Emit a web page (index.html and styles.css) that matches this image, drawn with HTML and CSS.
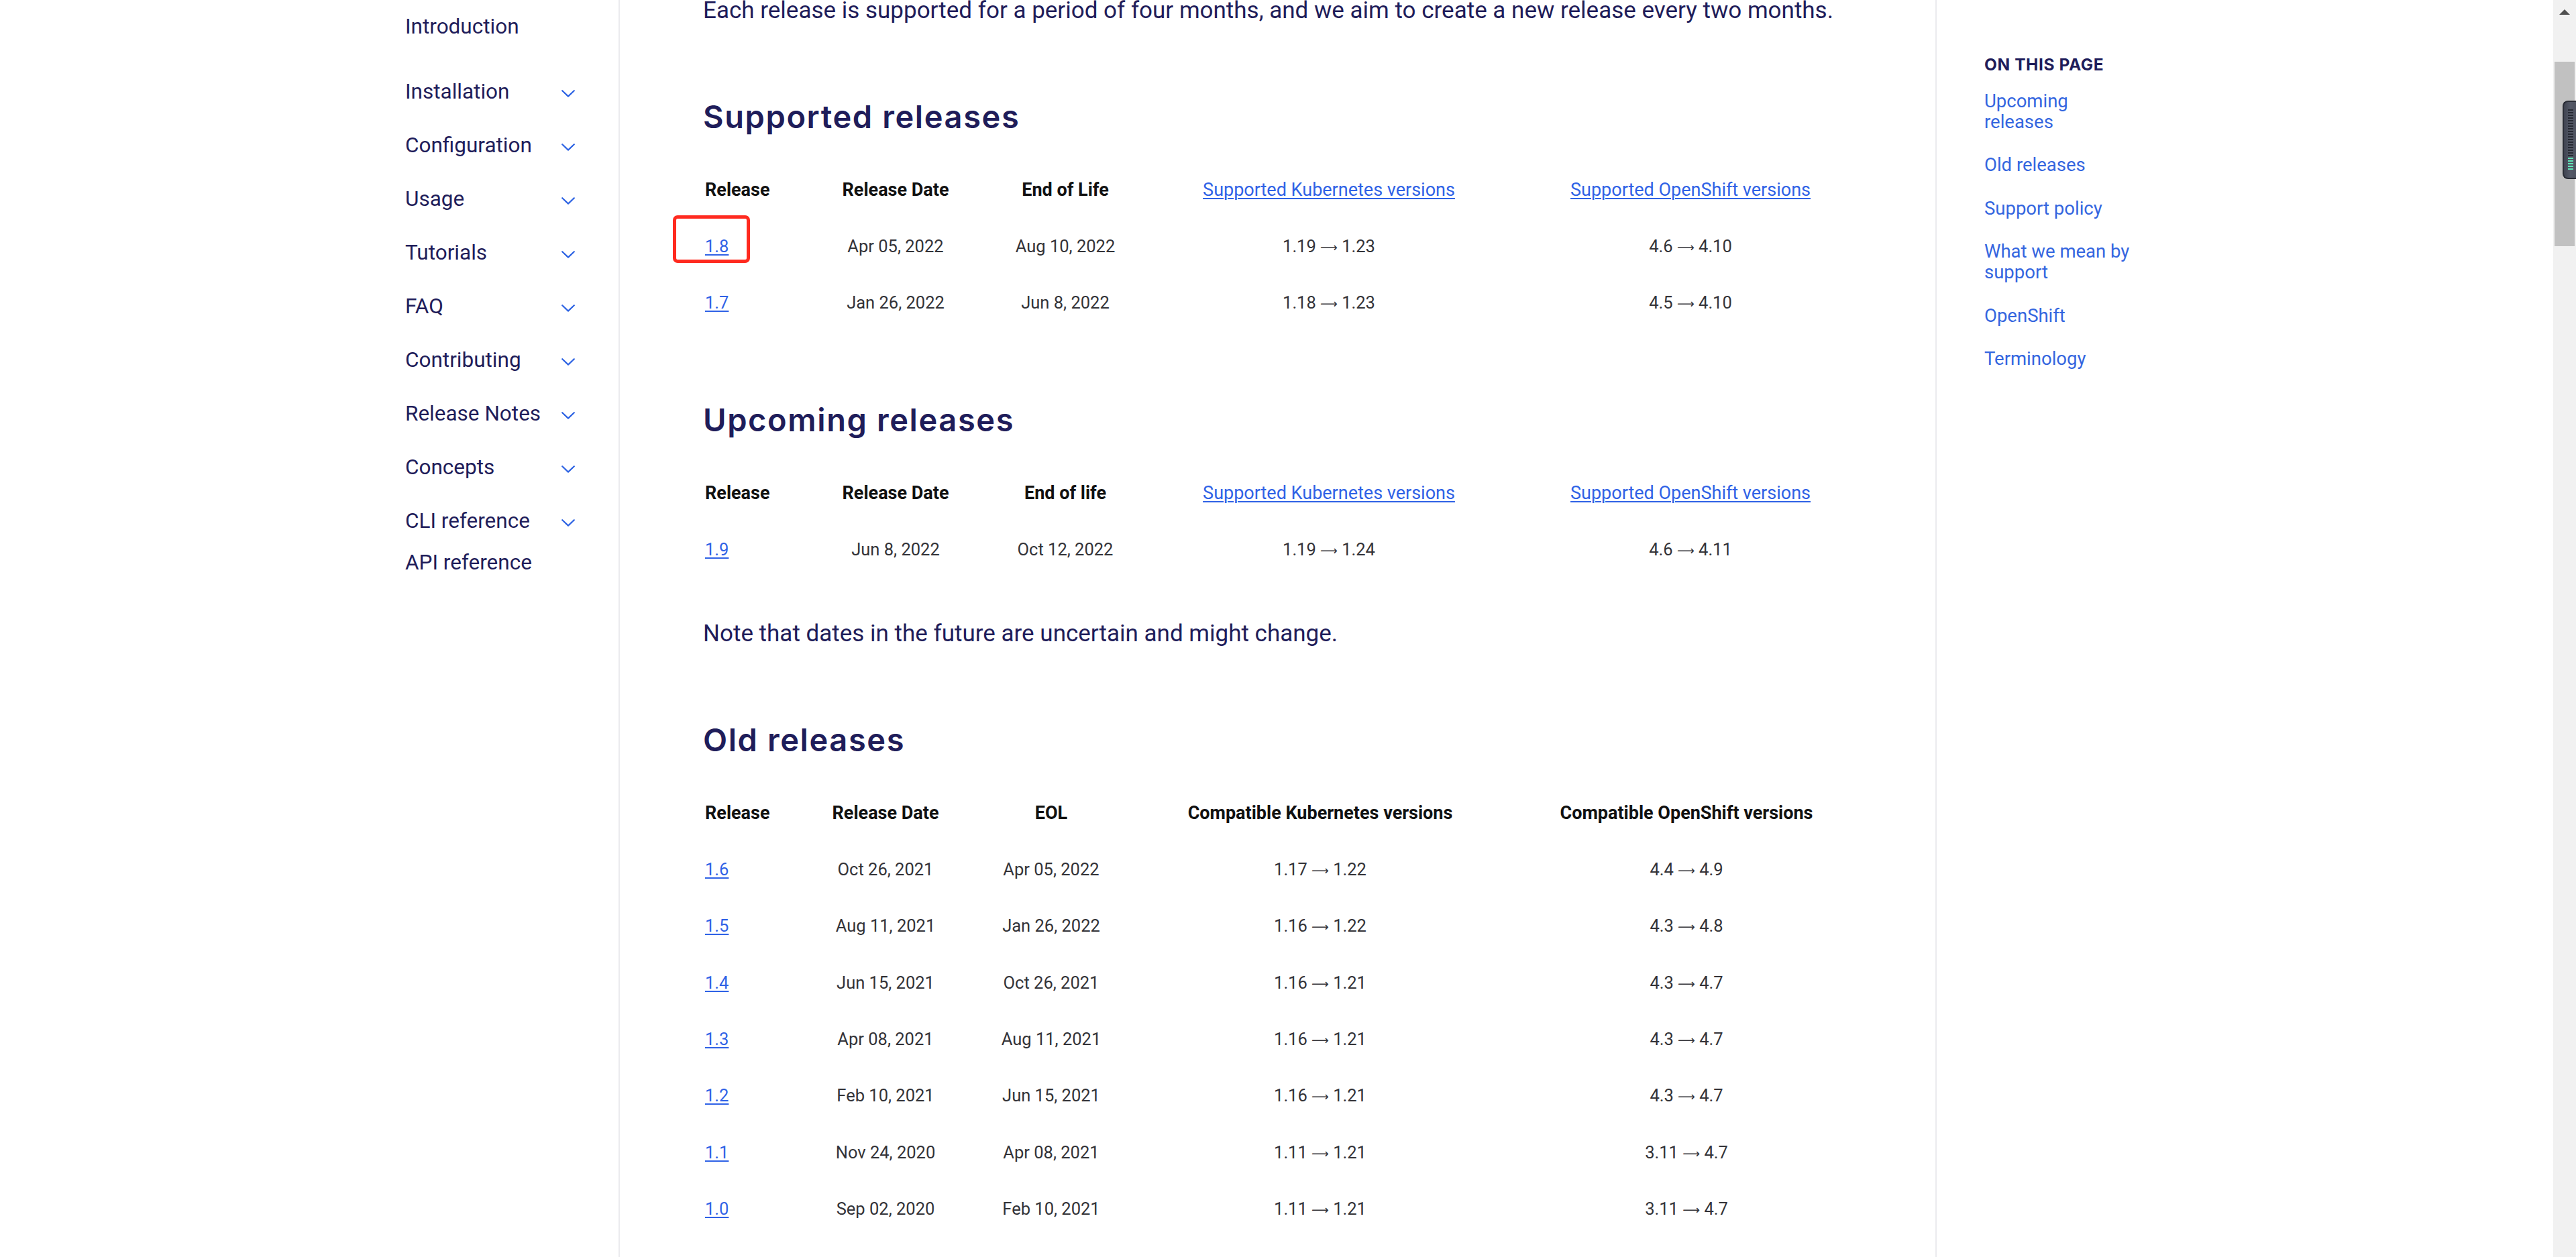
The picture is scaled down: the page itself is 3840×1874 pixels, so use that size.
FILE: index.html
```html
<!DOCTYPE html>
<html lang="en">
<head>
<meta charset="utf-8">
<title>Supported releases</title>
<link rel="stylesheet" href="styles.css">
</head>
<body>
<div class="page">
  <aside class="sidebar">
    <nav class="docs-nav">
      <a class="nav-item nav-intro" href="#">Introduction</a>
      <div class="nav-group"><a class="nav-item" href="#">Installation</a><svg class="chev" viewBox="0 0 20 11" width="20" height="11"><path d="M1.2 1.2 L10 9.6 L18.8 1.2"/></svg></div>
      <div class="nav-group"><a class="nav-item" href="#">Configuration</a><svg class="chev" viewBox="0 0 20 11" width="20" height="11"><path d="M1.2 1.2 L10 9.6 L18.8 1.2"/></svg></div>
      <div class="nav-group"><a class="nav-item" href="#">Usage</a><svg class="chev" viewBox="0 0 20 11" width="20" height="11"><path d="M1.2 1.2 L10 9.6 L18.8 1.2"/></svg></div>
      <div class="nav-group"><a class="nav-item" href="#">Tutorials</a><svg class="chev" viewBox="0 0 20 11" width="20" height="11"><path d="M1.2 1.2 L10 9.6 L18.8 1.2"/></svg></div>
      <div class="nav-group"><a class="nav-item" href="#">FAQ</a><svg class="chev" viewBox="0 0 20 11" width="20" height="11"><path d="M1.2 1.2 L10 9.6 L18.8 1.2"/></svg></div>
      <div class="nav-group"><a class="nav-item" href="#">Contributing</a><svg class="chev" viewBox="0 0 20 11" width="20" height="11"><path d="M1.2 1.2 L10 9.6 L18.8 1.2"/></svg></div>
      <div class="nav-group"><a class="nav-item" href="#">Release Notes</a><svg class="chev" viewBox="0 0 20 11" width="20" height="11"><path d="M1.2 1.2 L10 9.6 L18.8 1.2"/></svg></div>
      <div class="nav-group"><a class="nav-item" href="#">Concepts</a><svg class="chev" viewBox="0 0 20 11" width="20" height="11"><path d="M1.2 1.2 L10 9.6 L18.8 1.2"/></svg></div>
      <div class="nav-group"><a class="nav-item" href="#">CLI reference</a><svg class="chev" viewBox="0 0 20 11" width="20" height="11"><path d="M1.2 1.2 L10 9.6 L18.8 1.2"/></svg></div>
      <a class="nav-item" href="#">API reference</a>
    </nav>
  </aside>

  <main class="main">
    <p class="lead">Each release is supported for a period of four months, and we aim to create a new release every two months.</p>

    <h2 class="section-title">Supported releases</h2>
    <table class="rel-table tbl-current">
      <colgroup><col><col><col><col><col></colgroup>
      <thead>
        <tr><th>Release</th><th>Release Date</th><th>End of Life</th><th><a href="#">Supported Kubernetes versions</a></th><th><a href="#">Supported OpenShift versions</a></th></tr>
      </thead>
      <tbody>
        <tr><td class="rel-cell"><a href="#">1.8</a><span class="callout"></span></td><td>Apr 05, 2022</td><td>Aug 10, 2022</td><td>1.19 <span class="arrow">⟶</span> 1.23</td><td>4.6 <span class="arrow">⟶</span> 4.10</td></tr>
        <tr><td><a href="#">1.7</a></td><td>Jan 26, 2022</td><td>Jun 8, 2022</td><td>1.18 <span class="arrow">⟶</span> 1.23</td><td>4.5 <span class="arrow">⟶</span> 4.10</td></tr>
      </tbody>
    </table>

    <h2 class="section-title">Upcoming releases</h2>
    <table class="rel-table tbl-current">
      <colgroup><col><col><col><col><col></colgroup>
      <thead>
        <tr><th>Release</th><th>Release Date</th><th>End of life</th><th><a href="#">Supported Kubernetes versions</a></th><th><a href="#">Supported OpenShift versions</a></th></tr>
      </thead>
      <tbody>
        <tr><td><a href="#">1.9</a></td><td>Jun 8, 2022</td><td>Oct 12, 2022</td><td>1.19 <span class="arrow">⟶</span> 1.24</td><td>4.6 <span class="arrow">⟶</span> 4.11</td></tr>
      </tbody>
    </table>

    <p class="note">Note that dates in the future are uncertain and might change.</p>

    <h2 class="section-title">Old releases</h2>
    <table class="rel-table tbl-old">
      <colgroup><col><col><col><col><col></colgroup>
      <thead>
        <tr><th>Release</th><th>Release Date</th><th>EOL</th><th>Compatible Kubernetes versions</th><th>Compatible OpenShift versions</th></tr>
      </thead>
      <tbody>
        <tr><td><a href="#">1.6</a></td><td>Oct 26, 2021</td><td>Apr 05, 2022</td><td>1.17 <span class="arrow">⟶</span> 1.22</td><td>4.4 <span class="arrow">⟶</span> 4.9</td></tr>
        <tr><td><a href="#">1.5</a></td><td>Aug 11, 2021</td><td>Jan 26, 2022</td><td>1.16 <span class="arrow">⟶</span> 1.22</td><td>4.3 <span class="arrow">⟶</span> 4.8</td></tr>
        <tr><td><a href="#">1.4</a></td><td>Jun 15, 2021</td><td>Oct 26, 2021</td><td>1.16 <span class="arrow">⟶</span> 1.21</td><td>4.3 <span class="arrow">⟶</span> 4.7</td></tr>
        <tr><td><a href="#">1.3</a></td><td>Apr 08, 2021</td><td>Aug 11, 2021</td><td>1.16 <span class="arrow">⟶</span> 1.21</td><td>4.3 <span class="arrow">⟶</span> 4.7</td></tr>
        <tr><td><a href="#">1.2</a></td><td>Feb 10, 2021</td><td>Jun 15, 2021</td><td>1.16 <span class="arrow">⟶</span> 1.21</td><td>4.3 <span class="arrow">⟶</span> 4.7</td></tr>
        <tr><td><a href="#">1.1</a></td><td>Nov 24, 2020</td><td>Apr 08, 2021</td><td>1.11 <span class="arrow">⟶</span> 1.21</td><td>3.11 <span class="arrow">⟶</span> 4.7</td></tr>
        <tr><td><a href="#">1.0</a></td><td>Sep 02, 2020</td><td>Feb 10, 2021</td><td>1.11 <span class="arrow">⟶</span> 1.21</td><td>3.11 <span class="arrow">⟶</span> 4.7</td></tr>
      </tbody>
    </table>
  </main>

  <aside class="toc">
    <div class="toc-title">ON THIS PAGE</div>
    <ul class="toc-list">
      <li><a href="#">Upcoming releases</a></li>
      <li><a href="#">Old releases</a></li>
      <li><a href="#">Support policy</a></li>
      <li><a href="#">What we mean by support</a></li>
      <li><a href="#">OpenShift</a></li>
      <li><a href="#">Terminology</a></li>
    </ul>
  </aside>

  <div class="scrollbar">
    <div class="scroll-up"></div>
    <div class="scroll-thumb"></div>
    <div class="widget">
      <div class="bars"></div>
      <div class="bars bars-green"></div>
    </div>
  </div>
</div>
</body>
</html>
```

FILE: styles.css
```css
html, body {
  margin: 0;
  padding: 0;
  background: #ffffff;
  overflow: hidden;
}

body {
  font-family: Roboto, "Noto Sans", "Liberation Sans", sans-serif;
  color: #1f1d5a;
}

.page {
  display: flex;
  width: 3840px;
  height: 1874px;
  overflow: hidden;
}

/* ---------- left sidebar ---------- */
.sidebar {
  flex: none;
  width: 922px;
  border-right: 2px solid #ebebee;
  display: flex;
  justify-content: flex-end;
}

.docs-nav {
  width: 253px;
  margin-right: 65px;
  padding-top: 18px;
  display: flex;
  flex-direction: column;
}

.nav-item {
  font-size: 31.5px;
  line-height: 44px;
  color: #1f1d5a;
  text-decoration: none;
}

.nav-intro {
  margin-bottom: 34.5px;
}

.nav-group {
  display: flex;
  justify-content: space-between;
  align-items: center;
  padding: 18px 0;
}

.chev {
  margin-top: 5px;
  fill: none;
  stroke: #2d63e3;
  stroke-width: 2.2;
  stroke-linecap: round;
  stroke-linejoin: round;
}

/* ---------- main content ---------- */
.main {
  flex: none;
  width: 1961px;
  box-sizing: border-box;
  padding-left: 124px;
}

.lead {
  margin: -8.9px 0 0;
  font-size: 35px;
  line-height: 50px;
  color: #1f1d5a;
}

.note {
  margin: 58.7px 0 0;
  font-size: 35px;
  line-height: 50px;
  color: #1f1d5a;
}

.section-title {
  font-family: Inter, "Noto Sans", sans-serif;
  font-weight: 600;
  font-size: 47px;
  line-height: 60px;
  letter-spacing: 1.6px;
  color: #1f1d5a;
  margin: 102.5px 0 37px;
}

.rel-table {
  border-collapse: collapse;
  table-layout: fixed;
}

.tbl-current { width: 1716px; }
.tbl-current col:nth-child(1) { width: 132px; }
.tbl-current col:nth-child(2) { width: 310px; }
.tbl-current col:nth-child(3) { width: 196px; }
.tbl-current col:nth-child(4) { width: 590px; }
.tbl-current col:nth-child(5) { width: 488px; }

.tbl-old { width: 1698px; }
.tbl-old col:nth-child(1) { width: 112px; }
.tbl-old col:nth-child(2) { width: 320px; }
.tbl-old col:nth-child(3) { width: 174px; }
.tbl-old col:nth-child(4) { width: 628px; }
.tbl-old col:nth-child(5) { width: 464px; }

.rel-table th,
.rel-table td {
  padding: 24px 0;
  height: 36.3px;
  line-height: 36.3px;
  text-align: center;
  white-space: nowrap;
}

.rel-table th {
  font-size: 27px;
  font-weight: 700;
  color: #111111;
}

.rel-table td {
  font-size: 25.5px;
  color: #333338;
}

.rel-table th:first-child,
.rel-table td:first-child {
  text-align: left;
  padding-left: 3px;
}

.rel-table a {
  color: #2f62e6;
  text-decoration: underline;
  text-decoration-thickness: 2px;
  text-underline-offset: 3px;
  font-weight: 400;
}

.arrow {
  font-family: "DejaVu Sans", sans-serif;
  font-size: 18px;
  line-height: 1;
  vertical-align: 1px;
  color: #333338;
}

.rel-cell {
  position: relative;
}

.callout {
  position: absolute;
  left: -45px;
  top: -4px;
  width: 115px;
  height: 71px;
  box-sizing: border-box;
  border: 5px solid #ff2a1f;
  border-radius: 7px;
}

/* ---------- right toc ---------- */
.toc {
  flex: none;
  width: 921px;
  box-sizing: border-box;
  border-left: 2px solid #ebebee;
  padding: 80.6px 0 0 71px;
}

.toc-title {
  font-family: Inter, "Noto Sans", sans-serif;
  font-weight: 700;
  font-size: 24.5px;
  line-height: 30px;
  letter-spacing: 0.6px;
  color: #1f1d5a;
  margin-bottom: 24.4px;
}

.toc-list {
  list-style: none;
  margin: 0;
  padding: 0;
  width: 226px;
}

.toc-list li {
  font-size: 27.5px;
  line-height: 31px;
  margin-bottom: 33.5px;
}

.toc-list a {
  color: #3466df;
  text-decoration: none;
}

/* ---------- scrollbar ---------- */
.scrollbar {
  flex: none;
  width: 34px;
  background: #f1f1f1;
  display: flex;
  flex-direction: column;
  align-items: center;
  position: relative;
}

.scroll-up {
  width: 0;
  height: 0;
  border-left: 8px solid transparent;
  border-right: 8px solid transparent;
  border-bottom: 8px solid #505050;
  margin-top: 14px;
}

.scroll-thumb {
  width: 30px;
  height: 275px;
  margin-top: 70px;
  background: #c1c1c1;
}

.widget {
  position: absolute;
  left: 14px;
  top: 150px;
  width: 26px;
  height: 117px;
  box-sizing: border-box;
  padding: 11px 0 0 6px;
  background: linear-gradient(90deg, #3f4350, #545967 40%, #4a4e5b);
  border: 2px solid #2a2d36;
  border-right: none;
  border-radius: 8px 0 0 8px;
}

.bars {
  width: 8px;
  height: 72px;
  background: repeating-linear-gradient(180deg, #262933 0 2px, transparent 2px 4px);
}

.bars-green {
  height: 18px;
  background: repeating-linear-gradient(180deg, #5fe3b5 0 2px, transparent 2px 4px);
}
```
